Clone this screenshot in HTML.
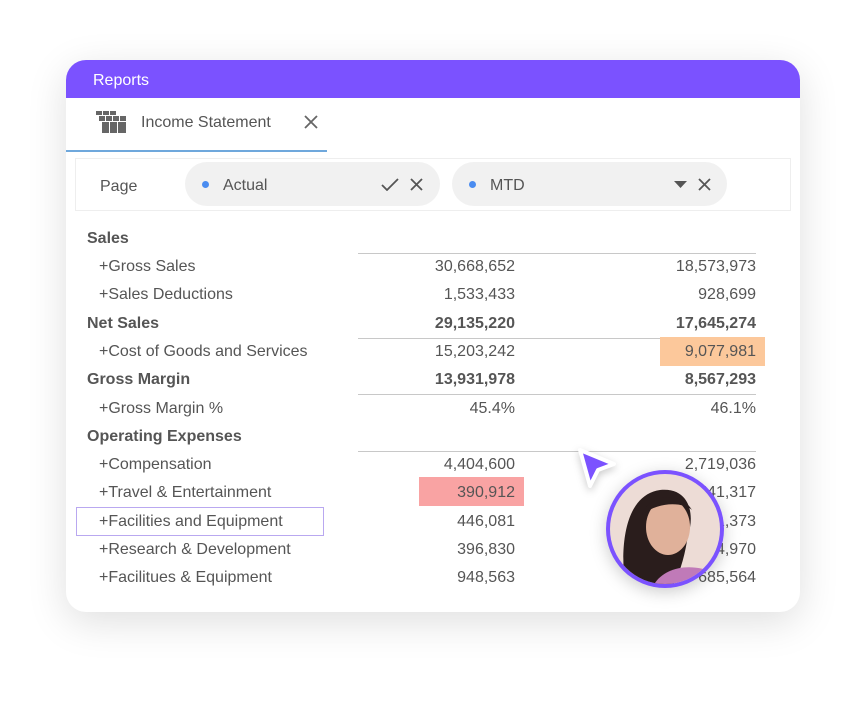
<!DOCTYPE html>
<html><head><meta charset="utf-8"><style>
body{margin:0;width:865px;height:704px;background:#fff;font-family:"Liberation Sans",Arial,sans-serif;position:relative;overflow:hidden}
.card{position:absolute;left:66px;top:60px;width:734px;height:552px;border-radius:20px;background:#fff;box-shadow:0 10px 40px rgba(0,0,0,.13);overflow:hidden}
.hdr{height:38px;background:#7b52ff;color:#fff;font-size:16px;line-height:42px;padding-left:27px}
.tab{position:absolute;left:0;top:38px;width:261px;height:52px;border-bottom:2px solid #6fa8dc}
.tab span{position:absolute;left:75px;top:16px;font-size:16px;color:#555}
.filt{position:absolute;left:9px;top:98px;width:714px;height:51px;border:1px solid #eee}
.pill{position:absolute;top:3px;height:44px;border-radius:22px;background:#f1f1f1}
.pill .dot{position:absolute;left:17px;top:19px;width:7px;height:7px;border-radius:50%;background:#4a8cf0}
.pill .t{position:absolute;left:38px;top:15px;font-size:16px;color:#555}
.r{position:absolute;font-size:16px;color:#555;white-space:nowrap;margin-top:2px}
.b{font-weight:bold}
.n{text-align:right;width:160px}
.ln{position:absolute;left:292px;width:398px;height:1px;background:#c8c8c8}
</style></head><body>
<div class="card">
<div class="hdr">Reports</div>
<div class="tab">
<svg style="position:absolute;left:30px;top:13px" width="34" height="24" viewBox="0 0 34 24" fill="#666">
<rect x="0" y="0" width="6" height="4"/><rect x="7" y="0" width="6" height="4"/><rect x="14" y="0" width="6" height="4"/>
<rect x="3" y="5" width="6" height="5"/><rect x="10" y="5" width="6" height="5"/><rect x="17" y="5" width="6" height="5"/>
<rect x="6" y="11" width="7" height="11"/><rect x="14" y="11" width="7" height="11"/><rect x="22" y="11" width="8" height="11"/><rect x="24" y="5" width="6" height="5"/>
</svg>
<span>Income Statement</span>
<svg style="position:absolute;left:238px;top:17px" width="14" height="14" viewBox="0 0 14 14" stroke="#666" stroke-width="1.8"><path d="M1 1L13 13M13 1L1 13"/></svg>
</div>
<div class="filt">
<div class="r" style="left:24px;top:17px">Page</div>
<div class="pill" style="left:109px;width:255px"><div class="dot"></div><div class="t">Actual</div>
<svg style="position:absolute;left:196px;top:16px" width="18" height="13" viewBox="0 0 18 13" stroke="#555" stroke-width="1.8" fill="none"><path d="M1 7L6 12L17 1"/></svg>
<svg style="position:absolute;left:225px;top:16px" width="13" height="13" viewBox="0 0 13 13" stroke="#555" stroke-width="1.8"><path d="M1 1L12 12M12 1L1 12"/></svg></div>
<div class="pill" style="left:376px;width:275px"><div class="dot"></div><div class="t">MTD</div>
<svg style="position:absolute;left:222px;top:19px" width="13" height="8" viewBox="0 0 13 8" fill="#555"><path d="M0 0H13L6.5 7Z"/></svg>
<svg style="position:absolute;left:246px;top:16px" width="13" height="13" viewBox="0 0 13 13" stroke="#555" stroke-width="1.8"><path d="M1 1L12 12M12 1L1 12"/></svg></div>
</div>
<div class="ln" style="top:193px"></div>
<div class="ln" style="top:278px"></div>
<div class="ln" style="top:334px"></div>
<div class="ln" style="top:391px"></div>
<div style="position:absolute;left:594px;top:277px;width:105px;height:29px;background:#fcc89b"></div>
<div style="position:absolute;left:353px;top:417px;width:105px;height:29px;background:#f9a3a3"></div>
<div style="position:absolute;left:10px;top:447px;width:246px;height:27px;border:1px solid #b9a8f0"></div>
<div class="r b" style="left:21px;top:168px">Sales</div>
<div class="r" style="left:33px;top:196px">+Gross Sales</div><div class="r n" style="left:289px;top:196px">30,668,652</div><div class="r n" style="left:530px;top:196px">18,573,973</div>
<div class="r" style="left:33px;top:224px">+Sales Deductions</div><div class="r n" style="left:289px;top:224px">1,533,433</div><div class="r n" style="left:530px;top:224px">928,699</div>
<div class="r b" style="left:21px;top:253px">Net Sales</div><div class="r n b" style="left:289px;top:253px">29,135,220</div><div class="r n b" style="left:530px;top:253px">17,645,274</div>
<div class="r" style="left:33px;top:281px">+Cost of Goods and Services</div><div class="r n" style="left:289px;top:281px">15,203,242</div><div class="r n" style="left:530px;top:281px">9,077,981</div>
<div class="r b" style="left:21px;top:309px">Gross Margin</div><div class="r n b" style="left:289px;top:309px">13,931,978</div><div class="r n b" style="left:530px;top:309px">8,567,293</div>
<div class="r" style="left:33px;top:338px">+Gross Margin %</div><div class="r n" style="left:289px;top:338px">45.4%</div><div class="r n" style="left:530px;top:338px">46.1%</div>
<div class="r b" style="left:21px;top:366px">Operating Expenses</div>
<div class="r" style="left:33px;top:394px">+Compensation</div><div class="r n" style="left:289px;top:394px">4,404,600</div><div class="r n" style="left:530px;top:394px">2,719,036</div>
<div class="r" style="left:33px;top:422px">+Travel &amp; Entertainment</div><div class="r n" style="left:289px;top:422px">390,912</div><div class="r n" style="left:530px;top:422px">2,541,317</div>
<div class="r" style="left:33px;top:451px">+Facilities and Equipment</div><div class="r n" style="left:289px;top:451px">446,081</div><div class="r n" style="left:530px;top:451px">1,373</div>
<div class="r" style="left:33px;top:479px">+Research &amp; Development</div><div class="r n" style="left:289px;top:479px">396,830</div><div class="r n" style="left:530px;top:479px">4,970</div>
<div class="r" style="left:33px;top:507px">+Facilitues &amp; Equipment</div><div class="r n" style="left:289px;top:507px">948,563</div><div class="r n" style="left:530px;top:507px">685,564</div>
</div>
<svg style="position:absolute;left:574px;top:446px;filter:drop-shadow(0 3px 4px rgba(0,0,0,.2))" width="46" height="46" viewBox="0 0 46 46"><path d="M6 4L40 18L24 24L16 40Z" fill="#7b52ff" stroke="#fff" stroke-width="4" stroke-linejoin="round"/></svg>
<svg style="position:absolute;left:600px;top:465px;filter:drop-shadow(0 4px 8px rgba(0,0,0,.2))" width="130" height="130" viewBox="0 0 130 130">
<defs><clipPath id="c"><circle cx="65" cy="64" r="55"/></clipPath></defs>
<circle cx="65" cy="64" r="59" fill="#7b52ff"/>
<g clip-path="url(#c)"><rect width="130" height="130" fill="#eddcd6"/>
<path d="M25 120C20 80 25 30 60 25C90 22 95 50 88 70C85 90 80 110 70 125Z" fill="#2a1d1c"/>
<ellipse cx="68" cy="62" rx="22" ry="28" fill="#e0b19a"/>
<path d="M42 50C48 30 80 25 92 45C85 38 60 35 42 50Z" fill="#2a1d1c"/>
<path d="M50 130C55 105 85 95 115 108L120 130Z" fill="#c07ab8"/></g>
</svg>
</body></html>
